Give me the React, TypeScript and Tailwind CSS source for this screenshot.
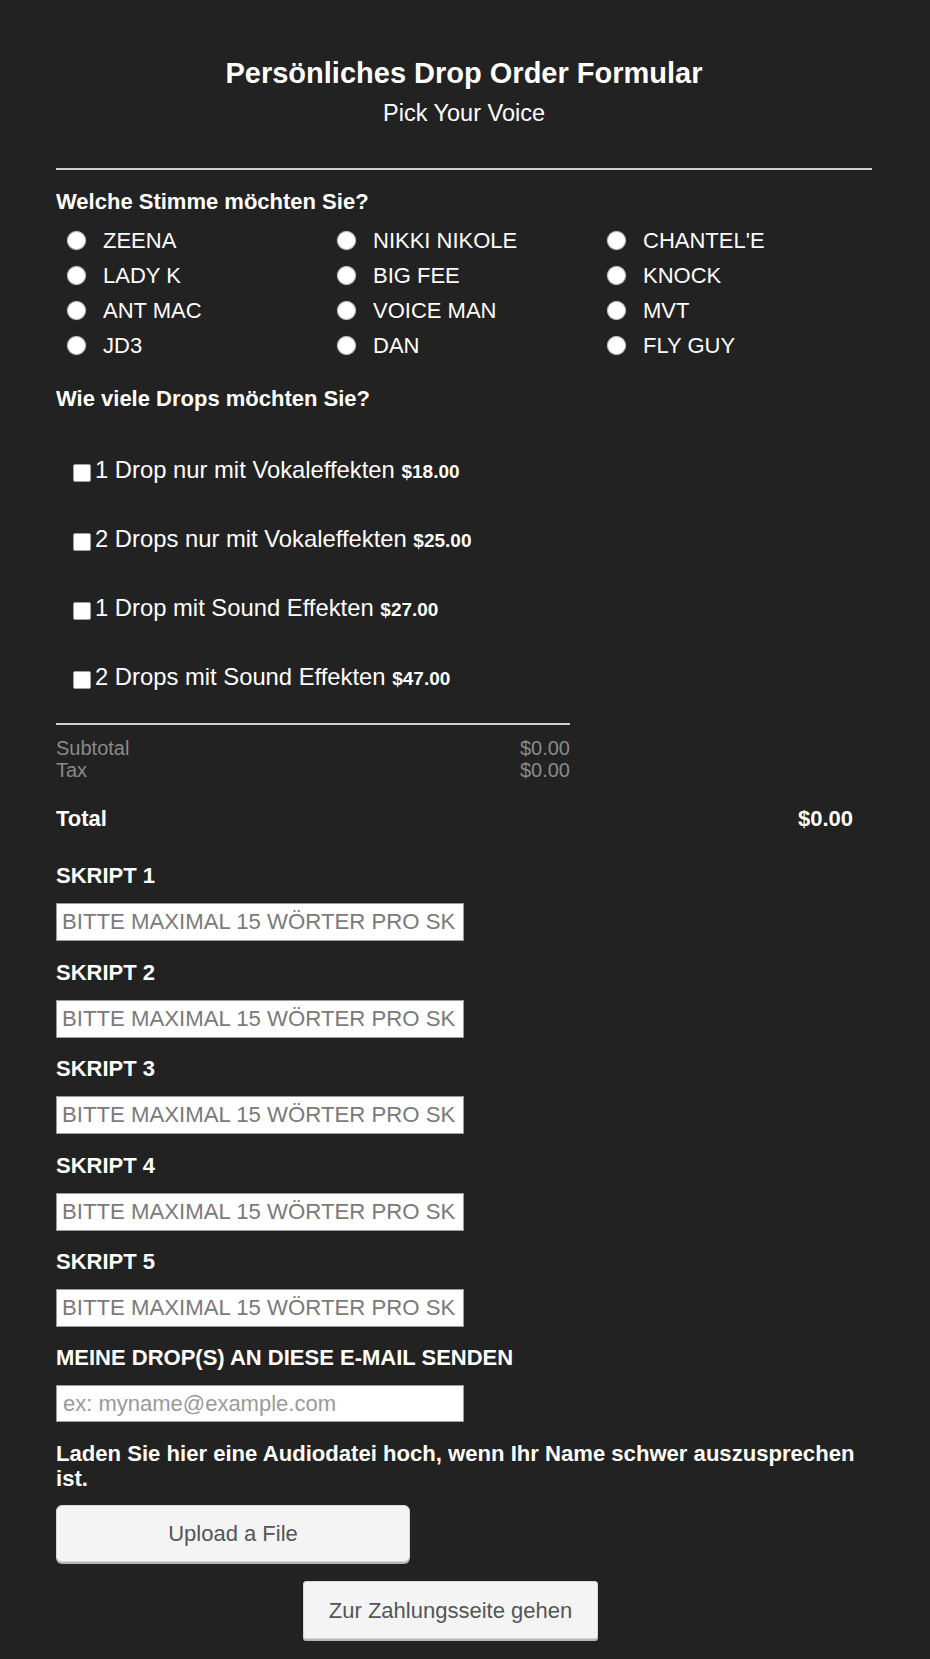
export default function App() {
  const voices = [
    "ZEENA",
    "NIKKI NIKOLE",
    "CHANTEL'E",
    "LADY K",
    "BIG FEE",
    "KNOCK",
    "ANT MAC",
    "VOICE MAN",
    "MVT",
    "JD3",
    "DAN",
    "FLY GUY",
  ];
  const drops: [string, string][] = [
    ["1 Drop nur mit Vokaleffekten", "$18.00"],
    ["2 Drops nur mit Vokaleffekten", "$25.00"],
    ["1 Drop mit Sound Effekten", "$27.00"],
    ["2 Drops mit Sound Effekten", "$47.00"],
  ];
  const scripts = [1, 2, 3, 4, 5];
  return (
    <div className="min-h-screen w-full bg-[#222222] text-white font-['Liberation_Sans',Arial,sans-serif]">
      <div className="pl-[56px] pr-[58px] pt-[56px] pb-[19px]">
        <h1 className="text-center text-[29px] leading-[34px] font-bold">
          Persönliches Drop Order Formular
        </h1>
        <p className="mt-[10px] text-center text-[23.5px] leading-[26px]">Pick Your Voice</p>
        <div className="mt-[42px] h-[2px] bg-[#cfcfcf]" />

        <div className="mt-[19px] text-[22px] leading-[26px] font-bold">Welche Stimme möchten Sie?</div>
        <div className="mt-[8px] grid grid-cols-[270px_270px_270px]">
          {voices.map((v) => (
            <label key={v} className="flex h-[35px] items-center pl-[11px]">
              <input
                type="radio"
                name="voice"
                className="m-0 h-[19px] w-[19px] appearance-none rounded-full border border-[#bdbdbd] bg-white shadow-[0_0_1px_#999]"
              />
              <span className="ml-[17px] text-[22px] leading-[26px]">{v}</span>
            </label>
          ))}
        </div>

        <div className="mt-[23px] text-[22px] leading-[26px] font-bold">Wie viele Drops möchten Sie?</div>
        <div className="mt-[24px] flex flex-col">
          {drops.map(([l, p]) => (
            <label key={l} className="flex h-[69px] items-center pl-[17px]">
              <input
                type="checkbox"
                className="m-0 mt-[4px] h-[18px] w-[18px] appearance-none rounded-[2px] border border-[#a0a0a0] bg-white"
              />
              <span className="ml-[4px] text-[23.8px] leading-[28px]">
                {l} <span className="text-[19px] font-bold">{p}</span>
              </span>
            </label>
          ))}
        </div>

        <div className="mt-[11px] h-[2px] w-[514px] bg-[#cfcfcf]" />
        <div className="mt-[12px] w-[514px] text-[20px] leading-[22px] text-[#8a8a8a]">
          <div className="flex justify-between">
            <span>Subtotal</span>
            <span>$0.00</span>
          </div>
          <div className="flex justify-between">
            <span>Tax</span>
            <span>$0.00</span>
          </div>
        </div>
        <div className="mt-[25px] flex w-[797px] justify-between text-[22px] leading-[26px] font-bold">
          <span>Total</span>
          <span>$0.00</span>
        </div>

        <div className="mt-[12.5px]">
          {scripts.map((n) => (
            <div key={n} className="pt-[18.5px]">
              <div className="text-[22px] leading-[26px] font-bold">SKRIPT {n}</div>
              <input
                type="text"
                placeholder="BITTE MAXIMAL 15 WÖRTER PRO SKRIPT"
                className="mt-[14px] block h-[38px] w-[408px] border border-[#9a9a9a] bg-white pl-[5px] pr-[7px] text-[22.2px] text-black outline-none placeholder:text-[#7a7a7a]"
              />
            </div>
          ))}
        </div>

        <div className="mt-[18px] text-[22px] leading-[26px] font-bold">MEINE DROP(S) AN DIESE E-MAIL SENDEN</div>
        <input
          type="email"
          placeholder="ex: myname@example.com"
          className="mt-[14px] block h-[37px] w-[408px] border border-[#9a9a9a] bg-white px-[6px] text-[22px] text-black outline-none placeholder:text-[#9a9a9a]"
        />

        <div className="mt-[19px] text-[22.1px] leading-[25px] font-bold">
          Laden Sie hier eine Audiodatei hoch, wenn Ihr Name schwer auszusprechen ist.
        </div>
        <button
          type="button"
          className="mt-[14px] block h-[57px] w-[354px] rounded-[6px] border border-[#d8d8d8] bg-[#f4f4f4] text-[22px] text-[#555555] shadow-[0_2px_0_#b5b5b5]"
        >
          Upload a File
        </button>
        <button
          type="button"
          className="ml-[247px] mt-[19px] block h-[58px] w-[295px] rounded-[3px] border border-[#d8d8d8] bg-[#f4f4f4] text-[22px] text-[#555555] shadow-[0_2px_0_#b5b5b5]"
        >
          Zur Zahlungsseite gehen
        </button>
      </div>
    </div>
  );
}
